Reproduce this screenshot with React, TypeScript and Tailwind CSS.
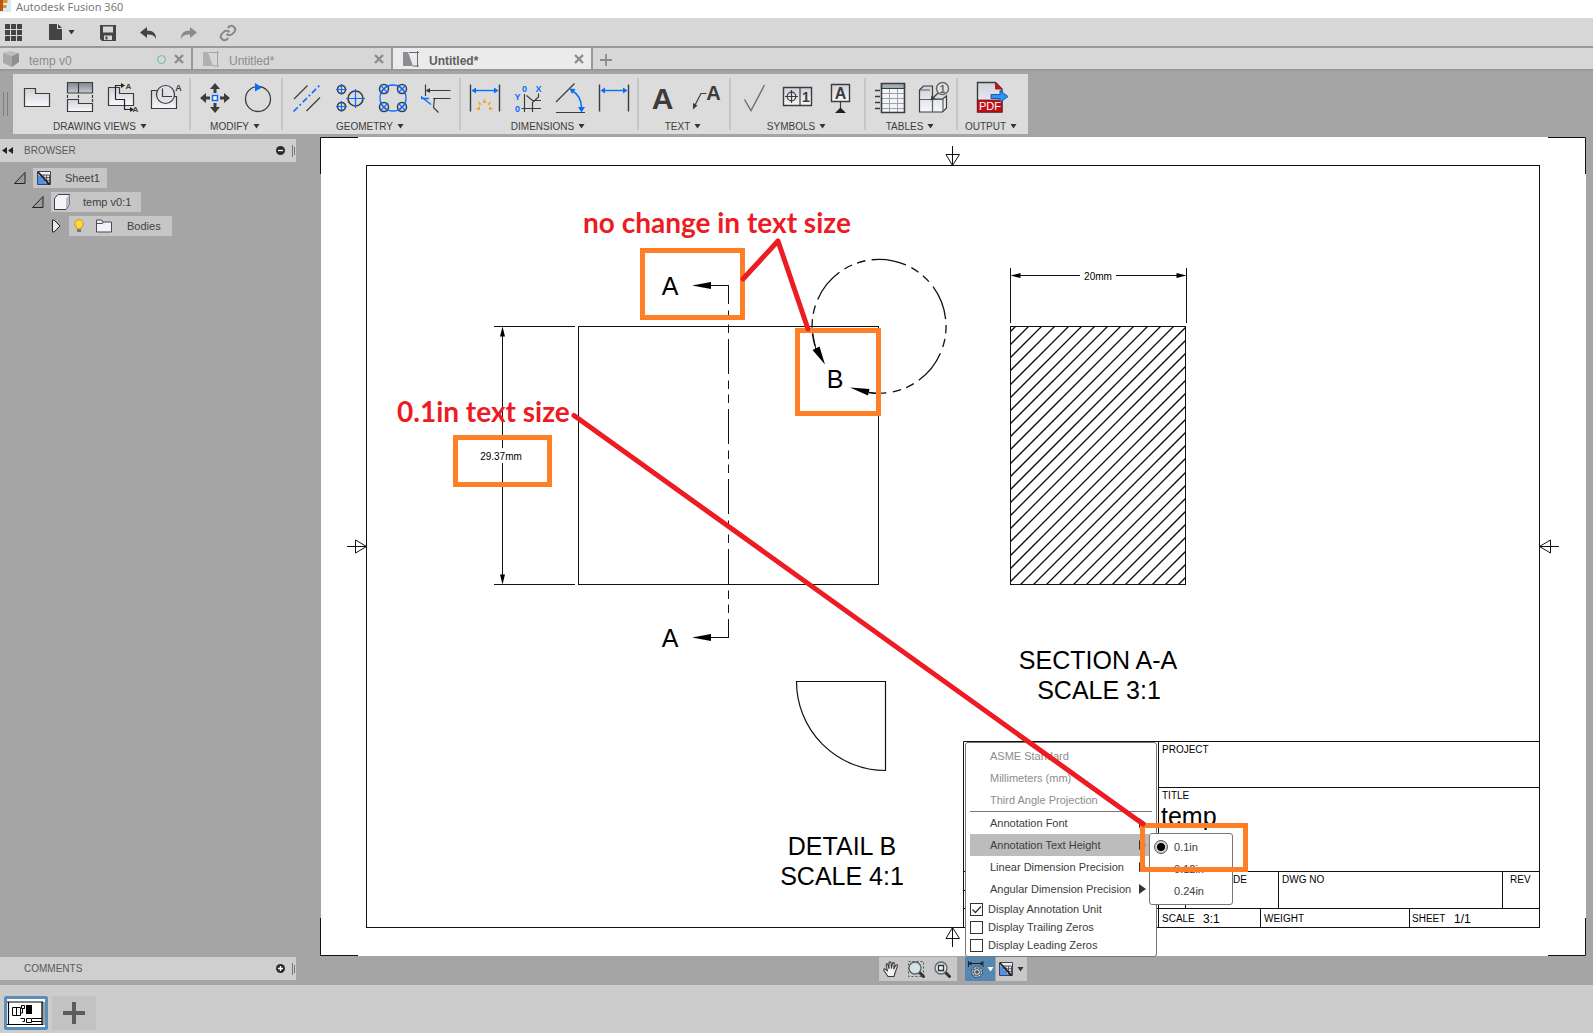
import { useState, type ReactNode } from 'react';
import { clsx } from 'clsx';

const INK = '#3c3c3c';
const BLUE = '#0a6cff';

function Caret({ className = 'text-[#333333]' }: { className?: string }) {
  return (
    <svg viewBox="0 0 7 5" className={clsx('h-[5px] w-[7px] shrink-0', className)} aria-hidden>
      <path d="M0.5 0h6l-3 4.5z" fill="currentColor" />
    </svg>
  );
}

function Cross({ className }: { className?: string }) {
  return (
    <svg viewBox="0 0 10 10" className={clsx('size-2.5', className)} aria-hidden>
      <path d="M1 1l8 8M9 1L1 9" stroke="currentColor" strokeWidth="2.4" />
    </svg>
  );
}

/* ---------- Ribbon ---------- */

function Icon({ children }: { children: ReactNode }) {
  return (
    <svg viewBox="0 0 33 32" className="h-8 w-[33px] shrink-0 overflow-visible" fill="none" stroke={INK} strokeWidth="1.2" aria-hidden>
      {children}
    </svg>
  );
}

function Glyph({ x, y, size, fill = INK, bold = true, children }: { x: number; y: number; size: number; fill?: string; bold?: boolean; children: string }) {
  return (
    <text x={x} y={y} fontSize={size} fontWeight={bold ? 700 : 400} fill={fill} stroke="none" textAnchor="middle" fontFamily="Liberation Sans, Arial, sans-serif">
      {children}
    </text>
  );
}

const BaseView = (
  <Icon>
    <path d="M4.5 6.5H15.5V11.5H29.5V24.5H4.5Z" fill="url(#steel)" />
  </Icon>
);
const ProjectedView = (
  <Icon>
    <path d="M4.5 0.5H29.5V11H4.5Z" fill="url(#dark)" />
    <path d="M15.5 0.5V11" />
    <path d="M4.5 13v3M15.5 13v3M29.5 13v7" strokeDasharray="3 1" />
    <path d="M4.5 17.5H15.5V21.5H29.5V29.5H4.5Z" fill="url(#steel)" />
  </Icon>
);
const SectionView = (
  <Icon>
    <path d="M2.5 5.5H13.5V11.5H27.5V23.5H2.5Z" fill="url(#steel)" />
    <path d="M9.5 17.5V3.5H16M9.5 17.5H18.5V27.5H25" stroke="#222222" />
    <path d="M15 1l4 2.500-4 2.500zM24 25l4 2.500-4 2.500z" fill="#222222" stroke="none" />
    <Glyph x={22.5} y={7} size={8}>A</Glyph>
    <Glyph x={29.5} y={30} size={8}>A</Glyph>
  </Icon>
);
const DetailView = (
  <Icon>
    <path d="M2.5 8.500H13.500V14.500H27.500V26.500H2.500Z" fill="url(#steel)" />
    <circle cx="16.500" cy="12.500" r="9" fill="#dfe1e6" />
    <path d="M13.500 6.500V14.500H23" />
    <Glyph x={29.500} y={9} size={9}>A</Glyph>
  </Icon>
);
const Move = (
  <Icon>
    <path d="M17 1l5 6h-3.500v4h-3v-4H12zM17 31l5-6h-3.500v-4h-3v4H12zM2 16l6-5v3.500h4v3H8V21zM32 16l-6-5v3.500h-4v3h4V21z" fill={INK} stroke="none" />
    <path d="M14.500 13.500h5v5h-5z" fill="#ffffff" stroke={BLUE} strokeWidth="1.500" />
  </Icon>
);
const Rotate = (
  <Icon>
    <circle cx="17" cy="17" r="12.500" strokeWidth="1.300" />
    <path d="M14 1l7 4.500L14 9.500z" fill={BLUE} stroke="none" />
  </Icon>
);
const Centerline = (
  <Icon>
    <path d="M4 17L17.500 3.500M16.500 29L30 15.500" />
    <path d="M3.500 29.500L30 3" stroke={BLUE} strokeWidth="1.600" strokeDasharray="6 2.500 2 2.500" />
  </Icon>
);
const CenterMark = (
  <Icon>
    <g strokeWidth="1.600">
      <circle cx="22.500" cy="16.500" r="7.500" />
      <circle cx="8.500" cy="7.500" r="4" />
      <circle cx="8.500" cy="24.500" r="4" />
    </g>
    <path d="M13 16.500h19M22.500 7v19M3 7.500h11M8.500 2v11M3 24.500h11M8.500 19v11" stroke={BLUE} />
  </Icon>
);
const CenterPattern = (
  <Icon>
    <circle cx="17" cy="16" r="13" stroke={BLUE} strokeWidth="1.300" />
    {[[8, 7], [26, 7], [8, 25], [26, 25]].map(([x, y]) => (
      <g key={`${x}-${y}`}>
        <circle cx={x} cy={y} r="4.500" strokeWidth="1.500" />
        <path d={`M${x - 4} ${y - 4}l8 8M${x + 4} ${y - 4}l-8 8`} stroke={BLUE} />
      </g>
    ))}
  </Icon>
);
const EdgeExtension = (
  <Icon>
    <path d="M6.500 2.500V14M8 8.500H31.500M14 16.500H31.500M15.500 16.500L14.500 25.500L19.500 30.500" />
    <path d="M6.500 8.500l4.500-2.500v5z" fill={INK} stroke="none" />
    <path d="M2 14.500L12 22.500M2 16.500H10" stroke={BLUE} strokeWidth="1.400" />
  </Icon>
);
const BlueSpan = (
  <>
    <path d="M2.500 2.500V29.500M31.500 2.500V29.500" strokeWidth="1.400" />
    <path d="M5 8.500H29" stroke={BLUE} strokeWidth="1.400" />
    <path d="M3.500 8.500l4.500-3v6zM30.500 8.500l-4.500-3v6z" fill={BLUE} stroke="none" />
  </>
);
const SmartDimension = (
  <Icon>
    {BlueSpan}
    <g fill="#f5a11c" stroke="none">
      <path d="M16.500 16.500l1.800 4.500h-3.600zM10 19l3.500 3-2.200 1.500zM23 19l-1.300 4.500-2.200-1.500zM7.500 27l4.500-2.500v3.500zM25.500 27l-4.500-2.500v3.500z" />
    </g>
  </Icon>
);
const Ordinate = (
  <Icon>
    <path d="M13.500 12v18M10.500 26.500H30M15.500 13.500L21.500 18.500H30M27.500 11.500V15L21.500 20.500V30" />
    <Glyph x={13.500} y={9.500} size={9} fill={BLUE}>0</Glyph>
    <Glyph x={27.500} y={9.500} size={9} fill={BLUE}>X</Glyph>
    <Glyph x={6.500} y={17.500} size={9} fill={BLUE}>Y</Glyph>
    <Glyph x={6.500} y={29.500} size={9} fill={BLUE}>0</Glyph>
  </Icon>
);
const AngularDimension = (
  <Icon>
    <path d="M2 20L20.500 1.500M2 30.500H31" />
    <path d="M18 8.500C24 12 27.500 18 27.500 26" stroke={BLUE} strokeWidth="1.500" />
    <path d="M15.500 6.500l6 0.500-3.500 5zM27.500 30.500l-3.500-5.500h7z" fill={BLUE} stroke="none" />
  </Icon>
);
const LinearDimension = <Icon>{BlueSpan}</Icon>;
const TextTool = (
  <Icon>
    <Glyph x={16.500} y={27} size={30}>A</Glyph>
  </Icon>
);
const LeaderTool = (
  <Icon>
    <Glyph x={24.500} y={18} size={20}>A</Glyph>
    <path d="M17.500 11.500H12L5.500 24" />
    <path d="M4 27.500l0-6.500 4.500 2.500z" fill={INK} stroke="none" />
  </Icon>
);
const SurfaceTexture = (
  <Icon>
    <path d="M6.500 17.500L13 28.500L26.500 3" stroke="#6e6e6e" strokeWidth="1.400" />
  </Icon>
);
const FeatureControl = (
  <Icon>
    <path d="M2.500 5.500H30.500V23.500H2.500Z" fill="url(#steel)" strokeWidth="1.400" />
    <path d="M19 5.500V23.500M4 14.500h13M10.500 8v13" />
    <circle cx="10.500" cy="14.500" r="4.300" />
    <Glyph x={25} y={19.500} size={14}>1</Glyph>
  </Icon>
);
const Datum = (
  <Icon>
    <path d="M7.500 2.500H25.500V19.500H7.500Z" fill="url(#steel)" strokeWidth="1.400" />
    <path d="M16.500 19.500V27" />
    <path d="M11 31l5.500-5.500L22 31z" fill="#222222" stroke="none" />
    <Glyph x={16.500} y={16.500} size={16}>A</Glyph>
  </Icon>
);
const TableTool = (
  <Icon>
    <path d="M2 8.500h5M2 14.500h5M2 20.500h5M2 26.500h5" strokeWidth="1.500" />
    <path d="M8.500 1.500H31.500V30.500H8.500Z" fill="#f3f4f7" stroke="none" />
    <path d="M8.500 11.500H31.500M8.500 16.500H31.500M8.500 21.500H31.500M8.500 26.500H31.500M16.500 6.500V30.500M24.500 6.500V30.500" stroke="#9da1aa" strokeWidth="1" />
    <path d="M8.500 1.500H31.500V6.500H8.500Z" fill="#9fb0b2" />
    <path d="M8.500 1.500H31.500V30.500H8.500Z" strokeWidth="1.600" />
  </Icon>
);
const Balloon = (
  <Icon>
    <path d="M3.500 8l4-4h9v13h10l4-3v12l-4 4H3.500z" fill="url(#steel)" />
    <path d="M3.500 17.500H16.500V30M3.500 8h10.500M16.500 17.500h10.500V30" stroke="#5b5f68" />
    <circle cx="26.500" cy="6.500" r="6" fill="#e2e2e2" stroke="#6a6a6a" strokeWidth="1.500" />
    <path d="M22 11l-5 5" />
    <path d="M14.500 18.500l1-5 4 3.500z" fill={INK} stroke="none" />
    <Glyph x={26.500} y={10.500} size={11} fill="#6a6a6a">1</Glyph>
  </Icon>
);
const PdfOutput = (
  <Icon>
    <path d="M1.500 0.500H19.500L26 7V30H1.500Z" fill="url(#steel)" strokeWidth="1.400" />
    <path d="M19.500 0.500L26 7H19.500Z" fill="#c4161c" stroke="#8e0f14" strokeWidth="0.800" />
    <path d="M1.500 18H26V30H1.500Z" fill="#c01016" stroke="#8e0f14" strokeWidth="0.800" />
    <path d="M15 12.500h9V8.500l8 6-8 6v-4h-9z" fill="#2f95f5" stroke="#0c4fa8" strokeWidth="0.900" />
    <Glyph x={14} y={28} size={11} fill="#ffffff" bold={false}>PDF</Glyph>
  </Icon>
);

type Tool = { name: string; icon: ReactNode };
const RIBBON: { label: string; wide?: boolean; tools: Tool[] }[] = [
  {
    label: 'DRAWING VIEWS',
    tools: [
      { name: 'Base View', icon: BaseView },
      { name: 'Projected View', icon: ProjectedView },
      { name: 'Section View', icon: SectionView },
      { name: 'Detail View', icon: DetailView },
    ],
  },
  { label: 'MODIFY', tools: [{ name: 'Move', icon: Move }, { name: 'Rotate', icon: Rotate }] },
  {
    label: 'GEOMETRY',
    tools: [
      { name: 'Centerline', icon: Centerline },
      { name: 'Center Mark', icon: CenterMark },
      { name: 'Center Mark Pattern', icon: CenterPattern },
      { name: 'Edge Extension', icon: EdgeExtension },
    ],
  },
  {
    label: 'DIMENSIONS',
    tools: [
      { name: 'Dimension', icon: SmartDimension },
      { name: 'Ordinate Dimension', icon: Ordinate },
      { name: 'Angular Dimension', icon: AngularDimension },
      { name: 'Linear Dimension', icon: LinearDimension },
    ],
  },
  { label: 'TEXT', tools: [{ name: 'Text', icon: TextTool }, { name: 'Leader', icon: LeaderTool }] },
  {
    label: 'SYMBOLS',
    tools: [
      { name: 'Surface Texture', icon: SurfaceTexture },
      { name: 'Feature Control Frame', icon: FeatureControl },
      { name: 'Datum Identifier', icon: Datum },
    ],
  },
  { label: 'TABLES', tools: [{ name: 'Table', icon: TableTool }, { name: 'Balloon', icon: Balloon }] },
  { label: 'OUTPUT', wide: true, tools: [{ name: 'Output PDF', icon: PdfOutput }] },
];

function Ribbon() {
  return (
    <div className="flex h-[60px]">
      <div className="flex w-[13px] items-center gap-[3px] pl-[3px]">
        <span className="h-6 w-px bg-[#7d7d7d]" />
        <span className="h-6 w-px bg-[#7d7d7d]" />
      </div>
      <div className="flex bg-[#dcdcdc]">
        {RIBBON.map((group, i) => (
          <section key={group.label} className="relative flex flex-col px-0.5 pt-2">
            <div className={clsx('flex', group.wide ? 'pr-3 pl-[11px]' : 'pr-0.5')}>
              {group.tools.map((tool) => (
                <button key={tool.name} title={tool.name} className="flex w-[43px] justify-center">
                  {tool.icon}
                </button>
              ))}
            </div>
            <button className="mt-[5px] flex h-[18px] items-center justify-center gap-1 pr-1 text-[10px] text-[#3c3c3c]">
              {group.label}
              <Caret />
            </button>
            {i < RIBBON.length - 1 && <span className="absolute top-1 right-0 h-[52px] w-0.5 bg-[#c6c6c6]" />}
          </section>
        ))}
      </div>
    </div>
  );
}

/* ---------- Top bars ---------- */

function QuickAccess() {
  return (
    <div className="flex h-[30px] items-center border-b-2 border-[#999999] bg-[#d7d7d7] pl-[5px] text-[#444444]">
      <button title="Data Panel">
        <svg viewBox="0 0 17 17" className="size-[17px]" fill="currentColor">
          {[0, 6, 12].map((y) => [0, 6, 12].map((x) => <rect key={`${x}${y}`} x={x} y={y} width="5" height="5" />))}
        </svg>
      </button>
      <button title="File" className="ml-[27px] flex items-center gap-1.5">
        <svg viewBox="0 0 13 16" className="h-4 w-[13px]" fill="currentColor">
          <path d="M0 0h8v5h5v11H0zM9 0l4 4H9z" />
        </svg>
        <Caret />
      </button>
      <button title="Save" className="ml-[25px] pt-px">
        <svg viewBox="0 0 16 16" className="size-4">
          <path d="M0 0h16v16H2l-2-2z" fill="currentColor" />
          <path d="M3 1.500h10v6H3zM4 10.500h8v4.500H4z" fill="#d7d7d7" />
          <path d="M5.500 11.500h2v3h-2z" fill="currentColor" />
        </svg>
      </button>
      <button title="Undo" className="ml-6 pt-0.5">
        <svg viewBox="0 0 17 13" className="h-[13px] w-[17px]" fill="currentColor">
          <path d="M7 0v3.500c6 0 9.500 3 9 9C15 8.500 12 7.500 7 7.500V11L0 5.500z" />
        </svg>
      </button>
      <button title="Redo" className="ml-[23px] pt-0.5 text-[#8a8a8a]">
        <svg viewBox="0 0 17 13" className="h-[13px] w-[17px]" fill="currentColor">
          <path d="M10 0v3.500c-6 0-9.500 3-9 9C2 8.500 5 7.500 10 7.500V11l7-5.500z" />
        </svg>
      </button>
      <button title="Link" className="ml-[22px] pt-0.5 text-[#8a8a8a]">
        <svg viewBox="0 0 24 24" className="size-[18px]" fill="none" stroke="currentColor" strokeWidth="2.800">
          <path d="M10 13a5 5 0 0 0 7.500 0.500l3-3a5 5 0 0 0-7-7l-1.700 1.700M14 11a5 5 0 0 0-7.500-0.500l-3 3a5 5 0 0 0 7 7l1.700-1.700" />
        </svg>
      </button>
    </div>
  );
}

function DrawingTabIcon({ active }: { active?: boolean }) {
  return (
    <svg viewBox="0 0 16 16" className={clsx('size-4', active ? 'text-[#8b8d92]' : 'text-[#aeb0b3]')} aria-hidden>
      <path d="M0 1h5l5 14H0z" fill="currentColor" />
      <path d="M6 1.500h10M10 15h6M14.500 0v16" stroke={active ? '#6a6a6a' : '#a5a5a5'} fill="none" />
    </svg>
  );
}

function DocumentTabs() {
  return (
    <div className="flex h-[23px] border-b-2 border-[#999999] bg-[#d7d7d7] text-xs text-[#8c8c8c]">
      <div className="flex w-[193px] items-center border-r-2 border-[#999999] pt-px pr-[7px] pl-[3px]">
        <svg viewBox="0 0 16 16" className="size-4" aria-hidden>
          <path d="M0 2L7 0l9 2-7 3z" fill="#bcbcbc" />
          <path d="M0 2l9 3v11L0 12z" fill="#a9a9a9" />
          <path d="M16 2L9 5v11l7-5z" fill="#8f8f8f" />
        </svg>
        <button className="ml-2.5 pt-1">temp v0</button>
        <span className="ml-auto size-[9px] rounded-full border-[1.5px] border-[#62bfa3]" />
        <button title="Close temp v0" className="ml-2">
          <Cross />
        </button>
      </div>
      <div className="flex w-[200px] items-center border-r-2 border-[#999999] pt-px pr-[7px] pl-2.5">
        <DrawingTabIcon />
        <button className="ml-2.5 pt-1">Untitled*</button>
        <button title="Close Untitled" className="ml-auto">
          <Cross />
        </button>
      </div>
      <div className="flex w-[200px] items-center border-r-2 border-[#999999] bg-[#ebebeb] pt-px pr-[7px] pl-2.5">
        <DrawingTabIcon active />
        <button className="ml-2.5 pt-1 font-bold text-[#606060]">Untitled*</button>
        <button title="Close Untitled" className="ml-auto">
          <Cross />
        </button>
      </div>
      <button title="New tab" className="ml-[7px] pt-0.5">
        <svg viewBox="0 0 12 12" className="size-3">
          <path d="M6 0v12M0 6h12" stroke="currentColor" strokeWidth="1.800" />
        </svg>
      </button>
    </div>
  );
}

/* ---------- Browser panel ---------- */

function SheetIcon() {
  return (
    <svg viewBox="0 0 14 14" className="size-3.5" aria-hidden>
      <path d="M0.500 0.500h13v13H0.500z" fill="#eef0f4" stroke="#44444c" />
      <path d="M4 4h8.500v8.500H4zM4 6.800h8.500M4 9.600h8.500M6.800 4v8.500M9.600 4v8.500" fill="none" stroke="#44444c" strokeWidth="0.900" />
      <path d="M1 3l9 10H1z" fill="#4b93f0" />
      <path d="M1 1l11.500 12.500" stroke="#1a1a1a" strokeWidth="1.700" />
    </svg>
  );
}

function Expander({ open }: { open: boolean }) {
  return (
    <svg viewBox="0 0 12 14" className="h-3.5 w-3" aria-hidden>
      {open ? (
        <path d="M11 1.500V12.500H0.500z" fill="#9a9a9a" stroke="#222222" />
      ) : (
        <path d="M2.500 1v12h1.500l6-6-6-6z" fill="#e8e8e8" stroke="#222222" />
      )}
    </svg>
  );
}

function PanelHeader({ title, collapsed }: { title: string; collapsed?: boolean }) {
  return (
    <div className="flex h-[23px] items-center bg-[#cfcfcf] pr-px text-[10px] text-[#5a5a5a]">
      <div className="w-6 pl-0.5">
        {!collapsed && (
          <svg viewBox="0 0 11 7" className="h-[7px] w-[11px]" fill="#222222" aria-hidden>
            <path d="M5 0v7L0 3.500zM11 0v7L6 3.500z" />
          </svg>
        )}
      </div>
      {title}
      <button title={collapsed ? `Expand ${title}` : `Collapse ${title}`} className="ml-auto">
        <svg viewBox="0 0 9 9" className="size-[9px]">
          <circle cx="4.500" cy="4.500" r="4.500" fill="#2b2b2b" />
          <path d={collapsed ? 'M2 4.500h5M4.500 2v5' : 'M2 4.500h5'} stroke="#ffffff" strokeWidth="1.300" />
        </svg>
      </button>
      <span className="ml-[7px] h-3 w-px bg-[#777777]" />
      <span className="ml-px h-2 w-px bg-[#777777]" />
    </div>
  );
}

function BrowserPanel() {
  return (
    <aside className="flex w-[297px] shrink-0 flex-col pt-[5px] pr-px pb-[5px]">
      <PanelHeader title="BROWSER" />
      <ul className="flex flex-col gap-1 pt-1.5 text-[11px] text-[#404040]">
        <li className="flex h-5 items-center pl-3.5">
          <Expander open />
          <button className="ml-[7px] flex h-5 items-center gap-3.5 bg-[#c6c6c6] pr-[7px] pl-1">
            <SheetIcon />
            Sheet1
          </button>
        </li>
        <li className="flex h-5 items-center pl-8">
          <Expander open />
          <button className="ml-[7px] flex h-5 items-center gap-[13px] bg-[#c6c6c6] pr-2.5 pl-[3px]">
            <svg viewBox="0 0 16 16" className="size-4" aria-hidden>
              <path d="M0.500 4.500L4 0.500h11.500v10L12 15.500H0.500z" fill="#f4f5f8" stroke="#3c3c48" />
              <path d="M12 4.500L15.500 0.500v10L12 15z" fill="#b9bdca" />
            </svg>
            temp v0:1
          </button>
        </li>
        <li className="flex h-5 items-center pl-[50px]">
          <Expander open={false} />
          <button className="ml-[7px] flex h-5 items-center bg-[#c6c6c6] pr-[11px] pl-[5px]">
            <svg viewBox="0 0 10 14" className="h-3.5 w-2.5" aria-hidden>
              <path d="M5 0.500a4.300 4.300 0 0 1 2.500 7.800L7 10H3L2.500 8.300A4.300 4.300 0 0 1 5 0.500z" fill="#ffd83b" stroke="#b98a10" strokeWidth="0.800" />
              <path d="M3 10h4v3H3z" fill="#777777" />
            </svg>
            <svg viewBox="0 0 16 14" className="ml-3 h-3.5 w-4" aria-hidden>
              <path d="M0.500 13V1h5l1 2h9v10z" fill="#f1f2f6" stroke="#4a4a55" />
              <path d="M0.500 4.500h6l1-1.500" fill="none" stroke="#4a4a55" />
            </svg>
            <span className="ml-[15px]">Bodies</span>
          </button>
        </li>
      </ul>
      <div className="mt-auto">
        <PanelHeader title="COMMENTS" collapsed />
      </div>
    </aside>
  );
}

/* ---------- Drawing sheet ---------- */

const SHEET_VIEW = '321 137 1265 819';
const PHANTOM = '35 6.5 8.5 5.5 8.5 6';
// each hatch line satisfies x + y = const
const HATCH = Array.from({ length: 33 }, (_, i) => 1342 + Math.round(i * 13.15));

function Sheet() {
  return (
    <svg viewBox={SHEET_VIEW} className="block h-auto w-full overflow-visible bg-white" role="img" aria-label="Drawing sheet" fontFamily="Liberation Sans, Arial, sans-serif" fill="none" stroke="#111111">
      <defs>
        <clipPath id="section-area">
          <rect x="1010" y="326" width="176" height="259" />
        </clipPath>
      </defs>

      {/* paper corners, border and centring marks */}
      <path d="M358 137.500H320.500V174M1548 137.500H1585.500V174M320.500 918V955.500H358M1585.500 918V955.500H1548" />
      <rect x="366.500" y="165.500" width="1173" height="762" />
      <path d="M952.500 146V165M946 154.500H959.500L952.500 165.500ZM952.500 947V928M946 938.500H959.500L952.500 927.500ZM347 546.500H366M355.500 540V553L366.500 546.500ZM1559 546.500H1540M1550.500 540V553L1539.500 546.500Z" />

      {/* front view and its height */}
      <rect x="578.500" y="326.500" width="300" height="258" />
      <path d="M494 326.500H575M494 584.500H575M502.500 334V448M502.500 463V577" />
      <path d="M502.500 326.500l2.500 10h-5zM502.500 584.500l2.500-10h-5z" fill="#000000" stroke="none" />

      {/* cutting plane A-A */}
      <path d="M728.500 285.500V637.500" strokeDasharray={PHANTOM} strokeDashoffset="16.500" />
      <path d="M729 285.500H710M729 637.500H710" />
      <path d="M692 285.500l19-3.500v7zM692 637.500l19-3.500v7z" fill="#000000" stroke="none" />

      {/* detail boundary B */}
      <path d="M868.500 392.500A67 67 0 1 0 815 346" strokeWidth="1.300" strokeDasharray={PHANTOM} strokeDashoffset="17" />
      <path d="M812.500 332L816 350" />
      <path d="M825 364.500l-12.500-14.500 7-3.500zM850 387.500l19.500 1.500-1.500 6.500z" fill="#000000" stroke="none" />

      {/* section view */}
      <g clipPath="url(#section-area)">
        {HATCH.map((sum) => (
          <path key={sum} d={`M${sum - 326} 326L${sum - 585} 585`} strokeWidth="1.300" />
        ))}
      </g>
      <rect x="1010.500" y="326.500" width="175" height="258" />
      <path d="M1010.500 268V323M1186.500 268V323M1019 275.500H1080M1116 275.500H1178" />
      <path d="M1010.500 275.500l10-2.500v5zM1186.500 275.500l-10-2.500v5z" fill="#000000" stroke="none" />

      {/* detail view */}
      <path d="M796.500 681.500H885.500V770.500A89 89 0 0 1 796.500 681.500Z" strokeWidth="1.200" />

      {/* title block */}
      <path d="M963.500 927V741.500H1539M1158.500 741V927M1158 787.500H1539M963 871.500H1539M963 890.500H1158M963 908.500H1539M1185.500 871V908M1278.500 871V908M1502.500 871V908M1260.500 908V927M1409.500 908V927" />

      <g fill="#000000" stroke="none">
        <g fontSize="10">
          <text x="501" y="460" textAnchor="middle">29.37mm</text>
          <text x="1098" y="280" textAnchor="middle">20mm</text>
          <text x="1162" y="753">PROJECT</text>
          <text x="1162" y="799">TITLE</text>
          <text x="1247" y="883" textAnchor="end">CODE</text>
          <text x="1282" y="883">DWG NO</text>
          <text x="1510" y="883">REV</text>
          <text x="1162" y="922">SCALE</text>
          <text x="1264" y="922">WEIGHT</text>
          <text x="1412" y="922">SHEET</text>
        </g>
        <g fontSize="12">
          <text x="1203" y="923">3:1</text>
          <text x="1454" y="923">1/1</text>
        </g>
        <g fontSize="25">
          <text x="1161" y="825">temp</text>
          <text x="670" y="295" textAnchor="middle">A</text>
          <text x="670" y="647" textAnchor="middle">A</text>
          <text x="835" y="388" textAnchor="middle">B</text>
          <text x="1098" y="669" textAnchor="middle">SECTION A-A</text>
          <text x="1099" y="699" textAnchor="middle">SCALE 3:1</text>
          <text x="842" y="855" textAnchor="middle">DETAIL B</text>
          <text x="842" y="885" textAnchor="middle">SCALE 4:1</text>
        </g>
      </g>
    </svg>
  );
}

/** Review markup: sits above the sheet and any open menu. */
function Markup() {
  return (
    <svg viewBox={SHEET_VIEW} className="pointer-events-none absolute inset-x-0 top-0 z-30 block h-auto w-full" fill="none" strokeWidth="5" aria-label="Markup">
      <g stroke="#ff7f27">
        <rect x="642.500" y="250.500" width="100" height="67" />
        <rect x="797.500" y="330.500" width="81" height="83" />
        <rect x="455.500" y="437.500" width="94" height="47" />
        <rect x="1142.500" y="825.500" width="103" height="44" />
      </g>
      <path d="M743 279L778 241L808 329M574 415.500L1143 824" stroke="#ed1c24" strokeLinecap="round" strokeLinejoin="round" />
      <g fill="#ed1c24" stroke="none" fontSize="28" fontWeight="700" fontFamily="Lato, sans-serif">
        <text x="583" y="233">no change in text size</text>
        <text x="397" y="422">0.1in text size</text>
      </g>
    </svg>
  );
}

/* ---------- Settings menu and navigation bar ---------- */

const HEIGHTS = ['0.1in', '0.12in', '0.24in'];

function HeightMenu() {
  const [height, setHeight] = useState('0.1in');
  return (
    <div className="absolute -top-px left-full z-10 w-[84px] rounded-[3px] border border-[#777777] bg-white py-0.5">
      {HEIGHTS.map((h) => (
        <label key={h} className="flex h-[22px] items-center gap-1.5 pl-1 text-[#3c3c3c]">
          <input
            type="radio"
            name="text-height"
            checked={height === h}
            onChange={() => setHeight(h)}
            className="size-3.5 appearance-none rounded-full checked:border checked:border-[#555555] checked:bg-[radial-gradient(circle,#000000_0_3.5px,#d0d0d0_4.5px)]"
          />
          {h}
        </label>
      ))}
    </div>
  );
}

function Toggle({ label, initial = false }: { label: string; initial?: boolean }) {
  const [on, setOn] = useState(initial);
  return (
    <label className="flex h-[18px] items-center gap-[5px]">
      <span className="relative size-[13px]">
        <input type="checkbox" checked={on} onChange={() => setOn(!on)} className="block size-[13px] appearance-none border border-[#333333] bg-white" />
        {on && (
          <svg viewBox="0 0 13 13" className="pointer-events-none absolute inset-0 size-[13px]" fill="none" stroke="#333333" strokeWidth="1.300">
            <path d="M2.500 6.500l3 3 5.500-6" />
          </svg>
        )}
      </span>
      {label}
    </label>
  );
}

const SUBMENUS = ['Annotation Font', 'Annotation Text Height', 'Linear Dimension Precision', 'Angular Dimension Precision'];

function SettingsMenu() {
  return (
    <div className="absolute bottom-full left-0 z-20 w-48 rounded-[3px] border border-[#777777] bg-white px-1 pt-0.5 pb-0.5 text-left text-[11px] text-[#3c3c3c]">
      {['ASME Standard', 'Millimeters (mm)', 'Third Angle Projection'].map((t) => (
        <div key={t} className="flex h-[22px] items-center pl-5 text-[#8c8c8c]">{t}</div>
      ))}
      <hr className="border-[#777777]" />
      {SUBMENUS.map((t) => {
        const open = t === 'Annotation Text Height';
        return (
          <div key={t} className="relative mr-[3px]">
            <button className={clsx('flex h-[22px] w-full items-center justify-between pr-[3px] pl-5 whitespace-nowrap', open && 'bg-[#bcbcbc]')}>
              {t}
              <svg viewBox="0 0 7 10" className="h-2.5 w-[7px]" fill="#333333" aria-hidden>
                <path d="M0 0l7 5-7 5z" />
              </svg>
            </button>
            {open && <HeightMenu />}
          </div>
        );
      })}
      <Toggle label="Display Annotation Unit" initial />
      <Toggle label="Display Trailing Zeros" />
      <Toggle label="Display Leading Zeros" />
    </div>
  );
}

function Lens({ marquee, fit }: { marquee?: boolean; fit?: boolean }) {
  return (
    <svg viewBox="0 0 17 17" className="size-[17px]" fill="none" aria-hidden>
      {marquee && <path d="M0.500 0.500h15v15H0.500z" stroke="#555555" strokeDasharray="2 2" />}
      <path d="M11 11l4.500 4.500" stroke="#333333" strokeWidth="3" strokeLinecap="round" />
      <circle cx="7" cy="7" r="6" fill="#d5e2e2" stroke="#5b646b" strokeWidth="1.300" />
      {fit && <path d="M4.500 4.500h5v5h-5z" fill="#f6f6f6" stroke="#333333" strokeWidth="1.300" />}
    </svg>
  );
}

function NavigationBar() {
  return (
    <div className="flex justify-center gap-2 pt-px pr-px pb-1">
      <div className="flex h-6 bg-[#c8c8c8] pr-0.5">
        <button title="Pan" className="flex w-6 items-center justify-center">
          <svg viewBox="0 0 16 17" className="h-[17px] w-4" fill="#f2f2f2" stroke="#3c3c3c" strokeWidth="1.100" strokeLinejoin="round">
            <path d="M5 15.500L1 9.500c-0.800-1.500 0.900-2 1.600-1.200L4.500 10 3.200 4.200c-0.300-1.500 1.400-1.800 1.700-0.400L6 7.500 6 2c0-1.500 1.900-1.500 2 0l0.400 5.300L9.500 2.500c0.400-1.400 2-1 1.800 0.400l-0.600 5 2-3.500c0.800-1.200 2.200-0.500 1.700 0.800L12 12l-1 3.500z" />
          </svg>
        </button>
        <button title="Zoom Window" className="flex w-[26px] items-center justify-center">
          <Lens marquee />
        </button>
        <button title="Fit" className="flex w-[26px] items-center justify-center">
          <Lens fit />
        </button>
      </div>
      <div className="flex h-6 gap-px">
        <div className="relative flex w-[30px] bg-[#5488b2]">
          <button title="Annotation settings" className="flex w-full items-center justify-center gap-[3px]">
            <svg viewBox="0 0 17 17" className="size-[17px]" fill="none" stroke="#222222" aria-hidden>
              <path d="M1.500 0v6M16 0v6M2 2.500h14M2 2.500l2-1.500v3zM16 2.500l-2-1.500v3z" />
              <circle cx="10" cy="11" r="4.600" stroke="#333333" strokeWidth="2.600" strokeDasharray="2.100 1.510" />
              <circle cx="10" cy="11" r="4.200" stroke="#dfe4e8" strokeWidth="1.800" strokeDasharray="1.600 1.700" />
              <circle cx="10" cy="11" r="3.400" fill="#dfe4e8" stroke="#333333" strokeWidth="0.800" />
              <circle cx="10" cy="11" r="1.300" fill="#5488b2" stroke="#333333" strokeWidth="0.900" />
            </svg>
            <Caret className="text-white" />
          </button>
          <SettingsMenu />
        </div>
        <button title="Sheet size" className="flex w-[31px] items-center justify-center gap-1 bg-[#c8c8c8]">
          <SheetIcon />
          <Caret />
        </button>
      </div>
    </div>
  );
}

/* ---------- Sheet strip ---------- */

function SheetStrip() {
  return (
    <footer className="flex h-12 items-start gap-1 bg-[#cccccc] pt-[11px] pl-1">
      <button title="Sheet1" className="h-[34px] w-11 rounded-[2px] border-[3px] border-[#5a8dba] bg-white">
        <svg viewBox="0 0 38 28" className="h-7 w-[38px]" fill="none" stroke="#000000">
          <path d="M36.500 3v23" stroke="#a0a0a0" strokeWidth="3" />
          <path d="M0 3h36M0 25.500h36M1.500 3v22M35 3v22" strokeWidth="1.200" />
          <path d="M5.500 8.500h8v8h-8zM9.500 8v9M14.500 6.500h3v3h-3zM15.500 10v4h-2M13.500 19.500h4v3h-2M19.500 19.500h5v4h-5zM25 19.500h10M25 22.500h10" />
          <path d="M19 6h6v9h-6z" fill="#000000" stroke="none" />
        </svg>
      </button>
      <button title="Add sheet" className="flex h-[34px] w-11 items-center justify-center bg-[#c2c2c2]">
        <svg viewBox="0 0 22 22" className="size-[22px]">
          <path d="M11 0v22M0 11h22" stroke="#5c5c5c" strokeWidth="4" />
        </svg>
      </button>
    </footer>
  );
}

export default function App() {
  return (
    <div className="flex min-h-screen flex-col bg-[#a5a5a5] font-['Liberation_Sans',Arial,sans-serif]">
      <svg className="absolute size-0" aria-hidden>
        <defs>
          <linearGradient id="steel" x1="0" y1="0" x2="0" y2="1">
            <stop offset="0" stopColor="#cfd2da" />
            <stop offset="1" stopColor="#f8f8fa" />
          </linearGradient>
          <linearGradient id="dark" x1="0" y1="0" x2="0" y2="1">
            <stop offset="0" stopColor="#80848e" />
            <stop offset="1" stopColor="#c9ccd2" />
          </linearGradient>
        </defs>
      </svg>

      <header className="flex h-[18px] items-start bg-white font-['Noto_Sans',sans-serif] text-[11px] leading-[14px] text-[#7a7a7a]">
        <svg viewBox="0 0 11 12" className="mr-[5px] h-3 w-[11px]" aria-hidden>
          <path d="M0 0h11v12H0z" fill="#d6ecf5" />
          <path d="M0 0h7.500v3H3v2h3.500v3H3v3H0z" fill="#f08a24" />
          <path d="M0 0h3v11H0z" fill="#b8560f" />
        </svg>
        Autodesk Fusion 360
      </header>
      <QuickAccess />
      <DocumentTabs />
      <div className="pt-[3px]">
        <Ribbon />
      </div>

      <div className="flex flex-1">
        <BrowserPanel />
        <main className="mr-[7px] ml-6 flex-1 pt-[3px]">
          <div className="relative">
            <Sheet />
            <Markup />
          </div>
          <NavigationBar />
        </main>
      </div>
      <SheetStrip />
    </div>
  );
}
